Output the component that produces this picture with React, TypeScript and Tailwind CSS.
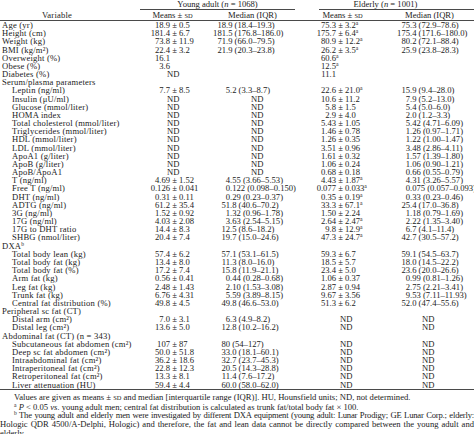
import React from 'react';

type Row = {
  label: string;
  sub?: boolean;
  head?: boolean;
  sup?: string;
  ym?: string;
  yd?: string;
  em?: string;
  ed?: string;
  tight?: boolean;
};

// "*" at the end of a value marks the superscript a (P < 0.05 vs. young adult)
const rows: Row[] = [
  { label: 'Age (yr)', ym: '18.9 ± 0.5', yd: '18.9 (18.4–19.3)', em: '75.3 ± 3.2*', ed: '75.3 (72.9–78.6)', tight: true },
  { label: 'Height (cm)', ym: '181.4 ± 6.7', yd: '181.5 (176.8–186.0)', em: '175.7 ± 6.4*', ed: '175.4 (171.6–180.0)', tight: true },
  { label: 'Weight (kg)', ym: '73.8 ± 11.9', yd: '71.9 (66.0–79.5)', em: '80.9 ± 12.2*', ed: '80.2 (72.1–88.4)', tight: true },
  { label: 'BMI (kg/m²)', ym: '22.4 ± 3.2', yd: '21.9 (20.3–23.8)', em: '26.2 ± 3.5*', ed: '25.9 (23.8–28.3)', tight: true },
  { label: 'Overweight (%)', ym: '16.1', em: '60.6*' },
  { label: 'Obese (%)', ym: '3.6', em: '12.5*' },
  { label: 'Diabetes (%)', ym: 'ND', em: '11.1' },
  { label: 'Serum/plasma parameters', head: true },
  { label: 'Leptin (ng/ml)', sub: true, ym: '7.7 ± 8.5', yd: '5.2 (3.3–8.7)', em: '22.6 ± 21.0*', ed: '15.9 (9.4–28.0)' },
  { label: 'Insulin (μU/ml)', sub: true, ym: 'ND', yd: 'ND', em: '10.6 ± 11.2', ed: '7.9 (5.2–13.0)' },
  { label: 'Glucose (mmol/liter)', sub: true, ym: 'ND', yd: 'ND', em: '5.8 ± 1.5', ed: '5.4 (5.0–6.0)' },
  { label: 'HOMA index', sub: true, ym: 'ND', yd: 'ND', em: '2.9 ± 4.0', ed: '2.0 (1.2–3.3)' },
  { label: 'Total cholesterol (mmol/liter)', sub: true, ym: 'ND', yd: 'ND', em: '5.43 ± 1.05', ed: '5.42 (4.71–6.09)' },
  { label: 'Triglycerides (mmol/liter)', sub: true, ym: 'ND', yd: 'ND', em: '1.46 ± 0.78', ed: '1.26 (0.97–1.71)' },
  { label: 'HDL (mmol/liter)', sub: true, ym: 'ND', yd: 'ND', em: '1.26 ± 0.35', ed: '1.22 (1.00–1.47)' },
  { label: 'LDL (mmol/liter)', sub: true, ym: 'ND', yd: 'ND', em: '3.51 ± 0.96', ed: '3.48 (2.86–4.11)' },
  { label: 'ApoA1 (g/liter)', sub: true, ym: 'ND', yd: 'ND', em: '1.61 ± 0.32', ed: '1.57 (1.39–1.80)' },
  { label: 'ApoB (g/liter)', sub: true, ym: 'ND', yd: 'ND', em: '1.06 ± 0.24', ed: '1.06 (0.90–1.21)' },
  { label: 'ApoB/ApoA1', sub: true, ym: 'ND', yd: 'ND', em: '0.68 ± 0.18', ed: '0.66 (0.55–0.79)' },
  { label: 'T (ng/ml)', sub: true, ym: '4.69 ± 1.52', yd: '4.55 (3.66–5.53)', em: '4.43 ± 1.87*', ed: '4.31 (3.26–5.57)' },
  { label: 'Free T (ng/ml)', sub: true, ym: '0.126 ± 0.041', yd: '0.122 (0.098–0.150)', em: '0.077 ± 0.033*', ed: '0.075 (0.057–0.093)' },
  { label: 'DHT (ng/ml)', sub: true, ym: '0.31 ± 0.11', yd: '0.29 (0.23–0.37)', em: '0.35 ± 0.19*', ed: '0.33 (0.23–0.46)' },
  { label: 'ADTG (ng/ml)', sub: true, ym: '61.2 ± 35.4', yd: '51.8 (40.6–70.2)', em: '33.3 ± 67.1*', ed: '25.4 (17.0–36.8)' },
  { label: '3G (ng/ml)', sub: true, ym: '1.52 ± 0.92', yd: '1.32 (0.96–1.78)', em: '1.50 ± 2.24', ed: '1.18 (0.79–1.69)' },
  { label: '17G (ng/ml)', sub: true, ym: '4.03 ± 2.08', yd: '3.63 (2.54–5.15)', em: '2.64 ± 2.47*', ed: '2.22 (1.35–3.40)' },
  { label: '17G to DHT ratio', sub: true, ym: '14.4 ± 8.3', yd: '12.5 (8.6–18.2)', em: '9.8 ± 12.9*', ed: '6.7 (4.1–11.4)' },
  { label: 'SHBG (nmol/liter)', sub: true, ym: '20.4 ± 7.4', yd: '19.7 (15.0–24.6)', em: '47.3 ± 24.7*', ed: '42.7 (30.5–57.2)' },
  { label: 'DXA', sup: 'b', head: true },
  { label: 'Total body lean (kg)', sub: true, ym: '57.4 ± 6.2', yd: '57.1 (53.1–61.5)', em: '59.3 ± 6.7', ed: '59.1 (54.5–63.7)' },
  { label: 'Total body fat (kg)', sub: true, ym: '13.4 ± 8.0', yd: '11.3 (8.0–16.0)', em: '18.5 ± 5.7', ed: '18.0 (14.5–22.2)' },
  { label: 'Total body fat (%)', sub: true, ym: '17.2 ± 7.4', yd: '15.8 (11.9–21.1)', em: '23.4 ± 5.0', ed: '23.6 (20.0–26.6)' },
  { label: 'Arm fat (kg)', sub: true, ym: '0.56 ± 0.41', yd: '0.44 (0.28–0.68)', em: '1.06 ± 0.37', ed: '0.99 (0.81–1.26)' },
  { label: 'Leg fat (kg)', sub: true, ym: '2.48 ± 1.43', yd: '2.10 (1.53–3.08)', em: '2.87 ± 0.94', ed: '2.75 (2.21–3.41)' },
  { label: 'Trunk fat (kg)', sub: true, ym: '6.76 ± 4.31', yd: '5.59 (3.89–8.15)', em: '9.67 ± 3.56', ed: '9.53 (7.11–11.93)' },
  { label: 'Central fat distribution (%)', sub: true, ym: '49.8 ± 4.5', yd: '49.8 (46.6–53.0)', em: '51.3 ± 6.2', ed: '52.0 (47.4–55.6)' },
  { label: 'Peripheral sc fat (CT)', head: true },
  { label: 'Distal arm (cm²)', sub: true, ym: '7.0 ± 3.1', yd: '6.3 (4.9–8.2)', em: 'ND', ed: 'ND' },
  { label: 'Distal leg (cm²)', sub: true, ym: '13.6 ± 5.0', yd: '12.8 (10.2–16.2)', em: 'ND', ed: 'ND' },
  { label: 'Abdominal fat (CT) (n = 343)', head: true },
  { label: 'Subcutaneous fat abdomen (cm²)', sub: true, ym: '107 ± 87', yd: '80 (54–127)', em: 'ND', ed: 'ND' },
  { label: 'Deep sc fat abdomen (cm²)', sub: true, ym: '50.0 ± 51.8', yd: '33.0 (18.1–60.1)', em: 'ND', ed: 'ND' },
  { label: 'Intraabdominal fat (cm²)', sub: true, ym: '36.2 ± 18.6', yd: '32.7 (23.7–45.3)', em: 'ND', ed: 'ND' },
  { label: 'Intraperitoneal fat (cm²)', sub: true, ym: '22.8 ± 12.3', yd: '20.5 (14.3–28.8)', em: 'ND', ed: 'ND' },
  { label: 'Retroperitoneal fat (cm²)', sub: true, ym: '13.3 ± 8.1', yd: '11.4 (7.6–17.2)', em: 'ND', ed: 'ND' },
  { label: 'Liver attenuation (HU)', sub: true, ym: '59.4 ± 4.4', yd: '60.0 (58.0–62.0)', em: 'ND', ed: 'ND' },
];

const grid = 'grid grid-cols-[140px_65px_95px_85px_89px]';

function Sup({ c }: { c: string }) {
  return <sup className="text-[5.6px] -top-[3px]">{c}</sup>;
}

// means ± sd, lined up on the ± sign
function Means({ v, box, nd }: { v?: string; box: string; nd: string }) {
  if (!v) return <div />;
  if (v === 'ND') return <div className={nd}>ND</div>;
  const star = v.endsWith('*');
  const s = star ? v.slice(0, -1) : v;
  const [a, b] = s.split(' ± ');
  return (
    <div className="flex whitespace-nowrap">
      <span className={`${box} shrink-0 text-right`}>{a}</span>
      <span>
        {b !== undefined && <>&nbsp;±&nbsp;{b}</>}
        {star && <Sup c="a" />}
      </span>
    </div>
  );
}

// median (IQR), lined up on the decimal point
function Median({ v, box, nd }: { v?: string; box: string; nd: string }) {
  if (!v) return <div />;
  if (v === 'ND') return <div className={nd}>ND</div>;
  const sp = v.indexOf(' ');
  const dot = v.indexOf('.');
  const i = dot >= 0 && dot < sp ? dot : sp;
  return (
    <div className="flex whitespace-nowrap">
      <span className={`${box} shrink-0 text-right`}>{v.slice(0, i)}</span>
      <span>{v.slice(i).replace(' ', '\u00a0')}</span>
    </div>
  );
}

export default function App() {
  return (
    <div className="w-[474px] h-[434px] overflow-hidden bg-white text-[#1b1b1b] font-['Liberation_Serif',serif] text-[8.6px]">
      {/* column headings */}
      <div className={`${grid} h-[10px] leading-[9px]`}>
        <div />
        <div className="col-span-2 mr-[5px] border-b border-[#4a4a4a] text-center">
          Young adult (<i>n</i> = 1068)
        </div>
        <div className="col-span-2 ml-[19px] border-b border-[#4a4a4a] pr-[22px] text-center">
          Elderly (<i>n</i> = 1001)
        </div>
      </div>
      <div className={`${grid} h-[11px] leading-[9.5px] pt-[0.5px] border-b border-[#4a4a4a]`}>
        <div className="pr-[26px] text-center tracking-[0.2px]">Variable</div>
        <div className="text-center">
          Means ± <span className="text-[6.4px]">SD</span>
        </div>
        <div className="text-center">Median (IQR)</div>
        <div className="text-center">
          Means ± <span className="text-[6.4px]">SD</span>
        </div>
        <div className="text-center">Median (IQR)</div>
      </div>

      {/* body */}
      <div className="border-b border-[#4a4a4a]">
        {rows.map((r) => (
          <div key={r.label} className={`${grid} h-[8.18px] leading-[8.18px]`}>
            <div
              className={
                r.sub
                  ? 'pl-[12px] whitespace-nowrap tracking-[0.2px]'
                  : 'pl-[2px] whitespace-nowrap tracking-[0.2px]'
              }
            >
              {r.label}
              {r.sup && <Sup c={r.sup} />}
            </div>
            <Means v={r.ym} box="w-[30px]" nd="pl-[27px]" />
            <Median v={r.yd} box={r.tight ? 'w-[21px]' : 'w-[25px]'} nd="pl-[46px]" />
            <Means v={r.em} box="w-[36px]" nd="pl-[40px]" />
            <Median v={r.ed} box="w-[25px]" nd="pl-[37px]" />
          </div>
        ))}
      </div>

      {/* footnotes */}
      <div className="pt-[3px] leading-[8.8px]">
        <p className="pl-[14px] whitespace-nowrap">
          Values are given as means ± <span className="text-[6.4px]">SD</span> and median [interquartile range
          (IQR)]. HU, Hounsfield units; ND, not determined.
        </p>
        <p className="pl-[14px] whitespace-nowrap">
          <Sup c="a" /> <i>P</i> &lt; 0.05 <i>vs.</i> young adult men; central fat distribution is calculated as
          trunk fat/total body fat × 100.
        </p>
        <p className="pl-[14px] text-justify tracking-[-0.2px] [text-align-last:justify]">
          <Sup c="b" /> The young adult and elderly men were investigated by different DXA equipment (young adult:
          Lunar Prodigy; GE Lunar Corp.; elderly:
        </p>
        <p className="text-justify [text-align-last:justify]">
          Hologic QDR 4500/A-Delphi, Hologic) and therefore, the fat and lean data cannot be directly compared
          between the young adult and elderly
        </p>
        <p>men.</p>
      </div>
    </div>
  );
}
